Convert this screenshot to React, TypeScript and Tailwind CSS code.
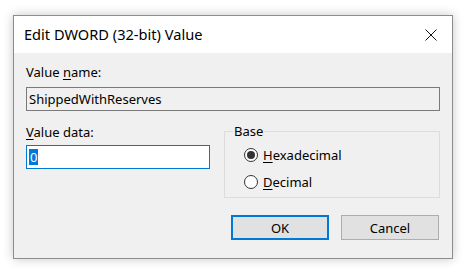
import React from "react";

const FONT = { fontFamily: '"Noto Sans", "Open Sans", Arial, sans-serif' };

function Radio({ checked, label }: { checked: boolean; label: React.ReactNode }) {
  return (
    <div className="flex items-center h-[20px]">
      <span className="w-[14px] h-[14px] rounded-full border border-[#333] bg-white flex items-center justify-center">
        {checked && <span className="w-[8px] h-[8px] rounded-full bg-[#333]" />}
      </span>
      <span className="ml-[5px] text-[13px] leading-[16px] text-black">{label}</span>
    </div>
  );
}

export default function App() {
  return (
    <div className="w-[465px] h-[270px] bg-white pl-[13px] pt-[15px]" style={FONT}>
      <div className="w-[440px] h-[244px] border border-[#8c8c8c] bg-[#f0f0f0] shadow-[0_0_10px_rgba(0,0,0,0.22)] flex flex-col">
        {/* title bar */}
        <div className="h-[37px] bg-white flex items-center justify-between pl-[10px] pr-[15px]">
          <span className="text-[14.6px] text-black leading-none">Edit DWORD (32-bit) Value</span>
          <svg width="12" height="12" viewBox="0 0 12 12" className="block">
            <path d="M0.5 0.5 L11.5 11.5 M11.5 0.5 L0.5 11.5" stroke="#111" strokeWidth="1" />
          </svg>
        </div>

        {/* body */}
        <div className="flex-1 px-[12px] pt-[11px] text-[13px] leading-[16px] text-black">
          <div>
            Value <span className="underline underline-offset-2">n</span>ame:
          </div>
          <div className="mt-[7px] h-[24px] border border-[#7a7a7a] bg-[#f0f0f0] flex items-center pl-[2px]">
            ShippedWithReserves
          </div>

          <div className="flex justify-between mt-[13px]">
            <div className="w-[184px]">
              <div>
                <span className="underline underline-offset-2">V</span>alue data:
              </div>
              <div className="mt-[5px] h-[24px] border border-[#0078d7] bg-white flex items-center pl-[2px]">
                <span className="bg-[#0078d7] text-white px-[1px]">0</span>
              </div>
            </div>

            <fieldset className="w-[216px] h-[75px] border border-[#dcdcdc] pl-[19px] pr-[14px] -mt-[1px]">
              <legend className="ml-[-11px] px-[1px] text-[13px] leading-[16px]">Base</legend>
              <div className="mt-[6px] flex flex-col gap-[7px]">
                <Radio checked label={<><span className="underline underline-offset-2">H</span>exadecimal</>} />
                <Radio checked={false} label={<><span className="underline underline-offset-2">D</span>ecimal</>} />
              </div>
            </fieldset>
          </div>

          <div className="flex justify-end gap-[12px] mt-[17px] pr-[1px]">
            <button className="w-[98px] h-[25px] border-2 border-[#0078d7] bg-[#e1e1e1] text-[13px]">OK</button>
            <button className="w-[98px] h-[25px] border border-[#adadad] bg-[#e1e1e1] text-[13px]">Cancel</button>
          </div>
        </div>
      </div>
    </div>
  );
}
